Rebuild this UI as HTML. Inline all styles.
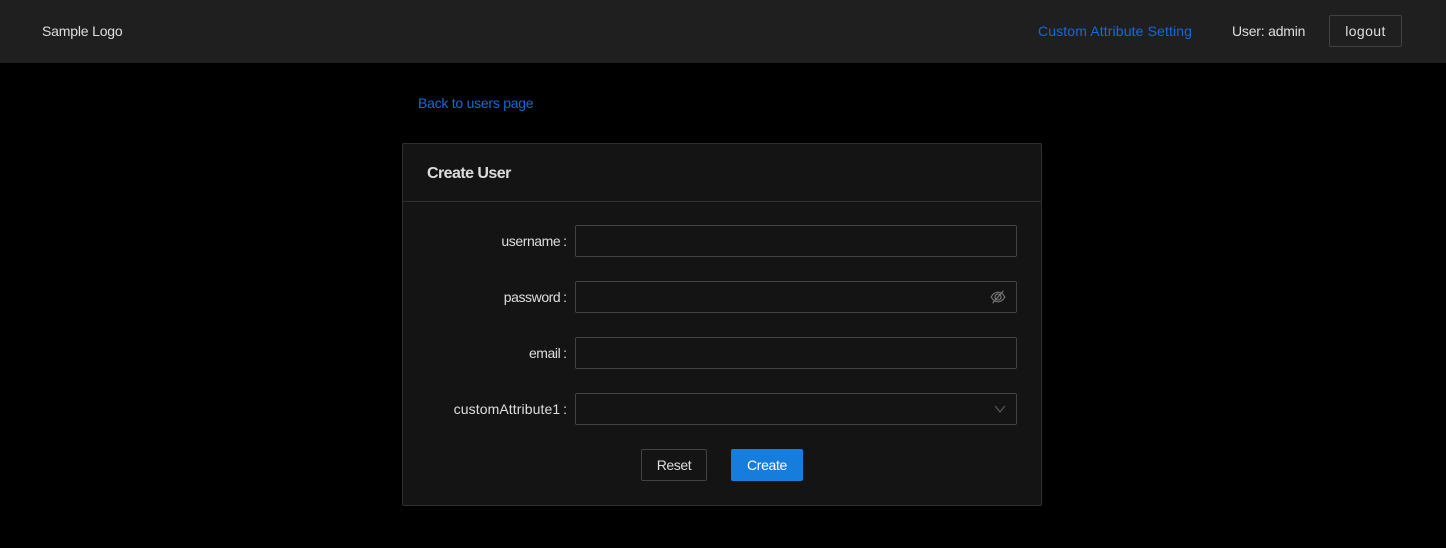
<!DOCTYPE html>
<html>
<head>
<meta charset="utf-8">
<style>
html,body{margin:0;padding:0;background:#000;width:1446px;height:548px;overflow:hidden}
body{position:relative;font-family:"Liberation Sans",sans-serif;font-size:14px;color:rgba(255,255,255,.85)}
.t{position:absolute;white-space:nowrap;line-height:22px}
.box{position:absolute;box-sizing:border-box}
.in{left:575px;width:442px;height:32px;border:1px solid #424242;border-radius:2px}
.lb{position:absolute;left:403px;width:164px;text-align:right;line-height:22px;white-space:nowrap}
a{color:#1668dc;text-decoration:none}
</style>
</head>
<body>
<div class="box" style="left:0;top:0;width:1446px;height:63px;background:#1f1f1f"></div>
<div class="t" style="left:42px;top:20px;letter-spacing:-.18px">Sample Logo</div>
<a class="t" style="left:1038px;top:20px;letter-spacing:.13px" href="#">Custom Attribute Setting</a>
<div class="t" style="left:1232px;top:20px;letter-spacing:-.2px">User: admin</div>
<div class="box" style="left:1329px;top:15px;width:73px;height:32px;border:1px solid #424242;border-radius:2px;text-align:center;line-height:30px;letter-spacing:.4px">logout</div>

<a class="t" style="left:418px;top:92px;letter-spacing:-.25px" href="#">Back to users page</a>

<div class="box" style="left:402px;top:143px;width:640px;height:363px;background:#141414;border:1px solid #303030;border-radius:2px"></div>
<div class="box" style="left:403px;top:201px;width:638px;height:1px;background:#303030"></div>
<div class="t" style="left:427px;top:163px;font-size:16px;font-weight:bold;letter-spacing:-.55px">Create User</div>

<div class="lb" style="top:230px"><span style="letter-spacing:-.42px">username</span>&thinsp;:</div>
<div class="box in" style="top:225px"></div>

<div class="lb" style="top:286px"><span style="letter-spacing:-.42px">password</span>&thinsp;:</div>
<div class="box in" style="top:281px"></div>
<svg style="position:absolute;left:990px;top:289px" width="16" height="16" viewBox="0 0 16 16" fill="none" stroke="#747474" stroke-width="1.2">
<path d="M1.2 8C3 4.8 5.3 3.2 8 3.2S13 4.8 14.8 8C13 11.2 10.7 12.8 8 12.8S3 11.2 1.2 8Z"/>
<circle cx="8" cy="8" r="3"/>
<path d="M13.4 1.8L2.6 14.2"/>
</svg>

<div class="lb" style="top:342px"><span style="letter-spacing:-.42px">email</span>&thinsp;:</div>
<div class="box in" style="top:337px"></div>

<div class="lb" style="top:398px"><span style="letter-spacing:.1px">customAttribute1</span>&thinsp;:</div>
<div class="box in" style="top:393px"></div>
<svg style="position:absolute;left:994px;top:403px" width="12" height="12" viewBox="0 0 12 12" fill="none" stroke="#5c5c5c" stroke-width="1.1">
<path d="M1.2 3L6 9L10.8 3"/>
</svg>

<div class="box" style="left:641px;top:449px;width:66px;height:32px;border:1px solid #424242;border-radius:2px;text-align:center;line-height:30px;letter-spacing:-.4px">Reset</div>
<div class="box" style="left:731px;top:449px;width:72px;height:32px;background:#177ddc;border-radius:2px;text-align:center;line-height:32px;color:#fff;letter-spacing:-.35px">Create</div>
</body>
</html>
